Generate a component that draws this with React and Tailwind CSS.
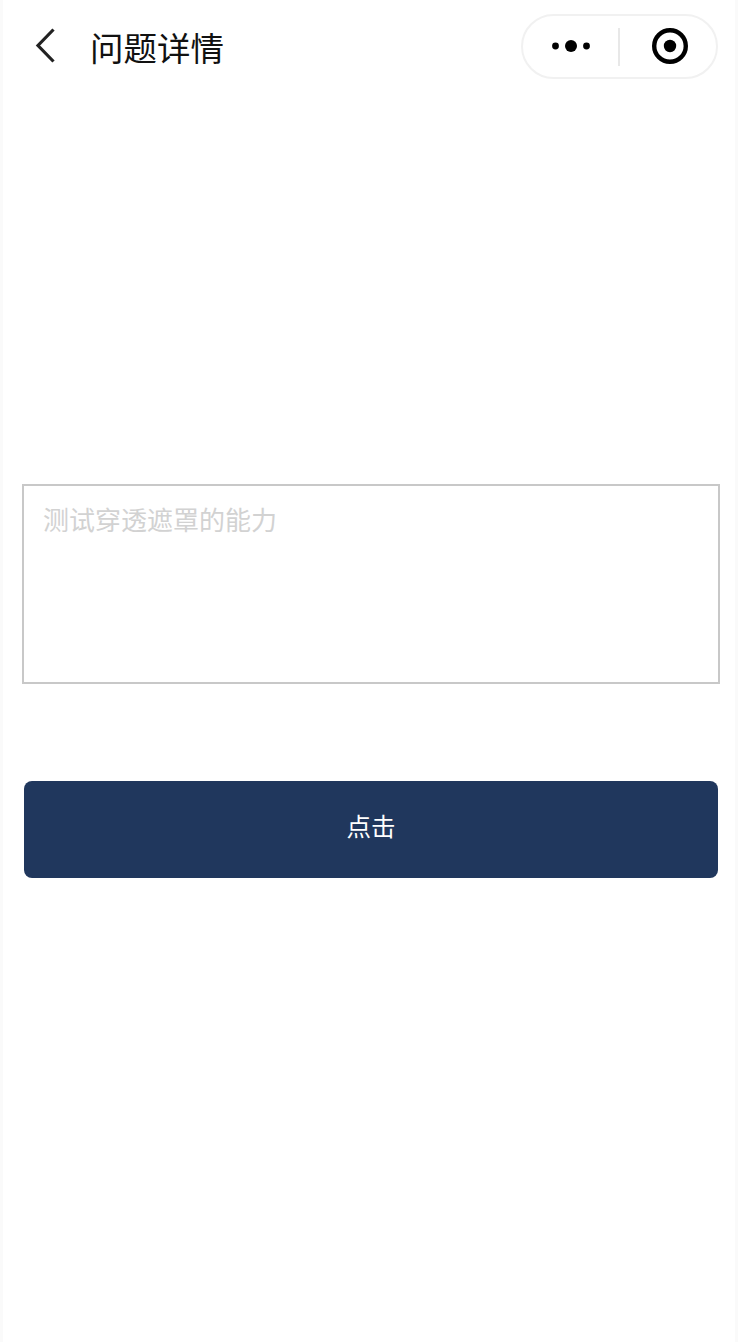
const fontStack = { fontFamily: '"Noto Sans CJK SC", sans-serif' };

function BackIcon() {
  return (
    <svg width="24" height="38" viewBox="0 0 24 38" fill="none" className="block">
      <path d="M21.5 2.5 L6 18.5 L21.5 34.5" stroke="#222" strokeWidth="3.2" strokeLinejoin="miter" />
    </svg>
  );
}

function MoreIcon() {
  return (
    <svg width="40" height="14" viewBox="0 0 40 14" className="block">
      <circle cx="4.5" cy="7" r="3.4" fill="#000" />
      <circle cx="20" cy="7" r="6" fill="#000" />
      <circle cx="35.5" cy="7" r="3.4" fill="#000" />
    </svg>
  );
}

function CloseIcon() {
  return (
    <svg width="38" height="38" viewBox="0 0 38 38" className="block">
      <circle cx="19" cy="19" r="15.8" fill="none" stroke="#000" strokeWidth="4.4" />
      <circle cx="19" cy="19" r="6.2" fill="#000" />
    </svg>
  );
}

export default function App() {
  return (
    <div className="h-[1342px] w-[738px] overflow-hidden bg-[#fafafa] px-[3px]" style={fontStack}>
      <div className="flex h-full flex-col bg-white">
        <header className="flex h-[92px] items-start">
          <div className="ml-[29px] mt-[27px]">
            <BackIcon />
          </div>
          <h1 className="ml-[34px] mt-[25px] text-[33.5px] font-normal leading-[44px] text-[#111]">问题详情</h1>
          <div className="ml-auto mr-[17px] mt-[14px] flex h-[65px] w-[197px] items-center rounded-full border-2 border-[#f1f1f1]">
            <div className="flex w-[95px] justify-center pb-[2px]">
              <MoreIcon />
            </div>
            <div className="h-[38px] w-[2px] bg-[#e8e8e8]" />
            <div className="flex flex-1 justify-center pb-[2px] pl-[4px]">
              <CloseIcon />
            </div>
          </div>
        </header>

        <div className="mt-[392px] pl-[19px] pr-[15px]">
          <textarea
            placeholder="测试穿透遮罩的能力"
            className="block h-[200px] w-full resize-none rounded-none border-2 border-[#c8c8c8] bg-white pl-[19px] pr-[20px] pt-[15px] text-[26px] leading-[36px] text-[#333] outline-none placeholder:text-[#d2d2d2]"
            style={fontStack}
          />
        </div>

        <div className="mt-[97px] pl-[21px] pr-[17px]">
          <button className="flex h-[97px] w-full items-center justify-center rounded-lg bg-[#20375d] pb-[6px] text-[24.5px] text-white">
            点击
          </button>
        </div>
      </div>
    </div>
  );
}
